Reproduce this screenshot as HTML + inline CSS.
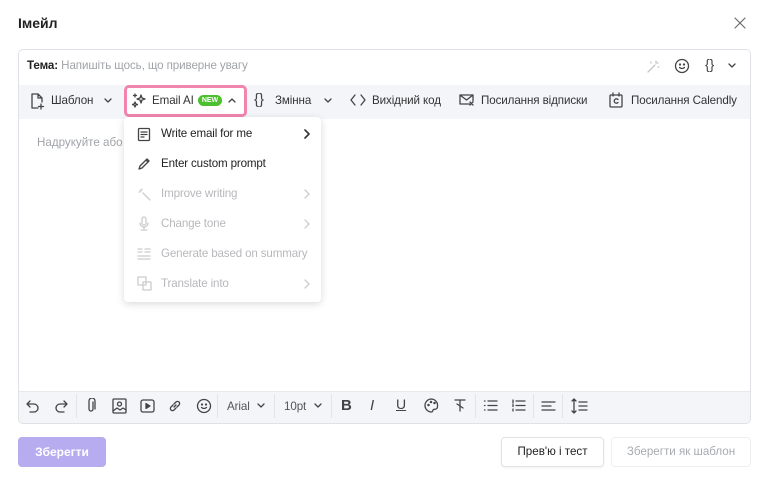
<!DOCTYPE html>
<html><head><meta charset="utf-8"><style>
*{box-sizing:border-box;margin:0;padding:0}
body{width:768px;height:481px;background:#fff;font-family:"Liberation Sans",sans-serif;color:#222;position:relative;overflow:hidden;font-size:12px}
.a{position:absolute}
svg{position:absolute;fill:none;stroke:#444;stroke-width:1.3;stroke-linecap:round;stroke-linejoin:round}
.tb{color:#333;font-size:11.6px;white-space:nowrap;letter-spacing:-0.1px}
.mi{position:absolute;left:161px;font-size:11.6px;color:#222;letter-spacing:-0.15px}
.dis{color:#b8b8bc}
</style></head><body>
<div class="a" style="left:18px;top:15px;font-size:14px;font-weight:bold;color:#222">Імейл</div>
<svg style="left:734px;top:17px" width="12" height="12"><path d="M1 1L11 11M11 1L1 11" stroke="#666" stroke-width="1.1"/></svg>

<div class="a" style="left:18px;top:49px;width:733px;height:375px;border:1px solid #dfe1e6;border-radius:5px;overflow:hidden">
 <div class="a" style="left:0;top:35px;width:100%;height:34px;background:#f3f5f9"></div>
 <div class="a" style="left:0;top:341px;width:100%;height:34px;background:#f3f5f9;border-top:1px solid #e6e8ec"></div>
</div>
<div class="a" style="left:27px;top:59px;font-size:11.6px;letter-spacing:-0.1px"><b>Тема:</b> <span style="color:#a0a3a8">Напишіть щось, що приверне увагу</span></div>
<svg style="left:645px;top:59px" width="16" height="16"><path d="M3 13L10 6M11 2v2M13 4h-2M6 3v1M14 8h-1" stroke="#c4c6ca"/></svg>
<svg style="left:674px;top:58px" width="16" height="16"><circle cx="8" cy="8" r="6.5"/><path d="M5.5 9.5q2.5 2 5 0"/><circle cx="6" cy="6.5" r=".5"/><circle cx="10" cy="6.5" r=".5"/></svg>
<div class="a" style="left:705px;top:56px;font-size:14px;color:#444">{}</div>
<svg style="left:727px;top:62px" width="10" height="8"><path d="M2 2l3 3 3-3"/></svg>

<!-- toolbar -->
<svg style="left:29px;top:92px" width="16" height="18"><path d="M9 2H3v14h6M9 2l4 4v4M9 2v4h4M12 12v5M9.5 14.5h5"/></svg>
<div class="a tb" style="left:51px;top:94px">Шаблон</div>
<svg style="left:103px;top:97px" width="10" height="8"><path d="M2 2l3 3 3-3"/></svg>
<div class="a" style="left:124px;top:85px;width:123px;height:32px;border:3px solid #f285ae;border-radius:5px;background:#fff"></div>
<svg style="left:131px;top:92px" width="16" height="16"><path d="M10 3l1 3 3 1-3 1-1 3-1-3-3-1 3-1zM4 10l.7 1.8 1.8.7-1.8.7L4 15l-.7-1.8-1.8-.7 1.8-.7zM4 2v3M2.5 3.5h3"/></svg>
<div class="a tb" style="left:152px;top:94px">Email AI</div>
<div class="a" style="left:198px;top:95px;width:24px;height:11px;background:#4cc02e;border-radius:6px;color:#fff;font-size:7px;font-weight:bold;text-align:center;line-height:11px">NEW</div>
<svg style="left:227px;top:96px" width="10" height="8"><path d="M2 6l3-3 3 3"/></svg>
<div class="a" style="left:254px;top:91px;font-size:15px;color:#444">{}</div>
<div class="a tb" style="left:275px;top:94px">Змінна</div>
<svg style="left:323px;top:97px" width="10" height="8"><path d="M2 2l3 3 3-3"/></svg>
<svg style="left:350px;top:94px" width="16" height="12"><path d="M5 1L1 6l4 5M11 1l4 5-4 5"/></svg>
<div class="a tb" style="left:372px;top:94px">Вихідний код</div>
<svg style="left:459px;top:93px" width="16" height="14"><path d="M11 11H1V2h13v6M1 2l6.5 5L14 2M11 9l3 3M14 9l-3 3"/></svg>
<div class="a tb" style="left:481px;top:94px">Посилання відписки</div>
<svg style="left:609px;top:92px" width="15" height="16"><rect x="1" y="3" width="12" height="12" rx="1"/><path d="M4 1v3M10 1v3M9 7.5a2.2 2.2 0 1 0 0 3"/></svg>
<div class="a tb" style="left:631px;top:94px">Посилання Calendly</div>

<div class="a" style="left:37px;top:136px;color:#a0a3a8;font-size:11.6px">Надрукуйте або</div>

<!-- menu -->
<div class="a" style="left:124px;top:117px;width:197px;height:185px;background:#fff;border-radius:4px;box-shadow:0 2px 8px rgba(0,0,0,.15)"></div>
<svg style="left:137px;top:127px" width="14" height="15"><rect x="1.5" y="1.5" width="11" height="12" rx="1"/><path d="M4 5h6M4 7.5h6M4 10h3"/></svg>
<div class="mi" style="top:127px">Write email for me</div>
<svg style="left:302px;top:129px" width="10" height="10"><path d="M3 1l4 4-4 4" stroke="#333" stroke-width="1.6"/></svg>
<svg style="left:137px;top:157px" width="14" height="14"><path d="M2 12l1-3 7-7 2 2-7 7zM9 3l2 2"/></svg>
<div class="mi" style="top:157px">Enter custom prompt</div>
<svg style="left:137px;top:187px" width="14" height="14"><path d="M3 3l1 1M5 2v1M2 5h1M6 6l7 7" stroke="#ccc"/></svg>
<div class="mi dis" style="top:187px">Improve writing</div>
<svg style="left:302px;top:189px" width="10" height="10"><path d="M3 1l4 4-4 4" stroke="#ccc"/></svg>
<svg style="left:137px;top:216px" width="14" height="16"><rect x="5" y="1" width="4" height="8" rx="2" stroke="#ccc"/><path d="M3 7a4 4 0 0 0 8 0M7 11v3M4 14h6" stroke="#ccc"/></svg>
<div class="mi dis" style="top:217px">Change tone</div>
<svg style="left:302px;top:219px" width="10" height="10"><path d="M3 1l4 4-4 4" stroke="#ccc"/></svg>
<svg style="left:137px;top:247px" width="14" height="14"><path d="M1 2h4M8 2h5M1 5h4M8 5h5M1 9h12M1 12h12" stroke="#ccc"/></svg>
<div class="mi dis" style="top:247px">Generate based on summary</div>
<svg style="left:137px;top:276px" width="15" height="15"><rect x="1" y="1" width="8" height="8" stroke="#ccc"/><rect x="6" y="6" width="8" height="8" stroke="#ccc"/></svg>
<div class="mi dis" style="top:277px">Translate into</div>
<svg style="left:302px;top:279px" width="10" height="10"><path d="M3 1l4 4-4 4" stroke="#ccc"/></svg>

<!-- bottom toolbar -->
<svg style="left:26px;top:399px" width="14" height="14"><path d="M4 2L1 5l3 3M1 5h7a4 4 0 0 1 0 8H4"/></svg>
<svg style="left:54px;top:399px" width="14" height="14"><path d="M10 2l3 3-3 3M13 5H6a4 4 0 0 0 0 8h4"/></svg>
<div class="a" style="left:76px;top:394px;width:1px;height:24px;background:#e2e4e8"></div>
<svg style="left:85px;top:398px" width="12" height="16"><path d="M8 4v7a2 2 0 0 1-4 0V3a3 3 0 0 1 6 0v8"/></svg>
<svg style="left:112px;top:398px" width="15" height="16"><rect x="1" y="1" width="13" height="14" rx="1"/><circle cx="7.5" cy="6" r="2"/><path d="M1 13l4-3 3 2 3-2 3 2"/></svg>
<svg style="left:140px;top:399px" width="15" height="14"><rect x="1" y="1" width="13" height="12" rx="2"/><path d="M6 4.5v5l4-2.5z" fill="#444"/></svg>
<svg style="left:168px;top:399px" width="14" height="14"><path d="M6 8l2-2M5 6L3 8a2 2 0 0 0 3 3l2-2M9 8l2-2a2 2 0 0 0-3-3L6 5"/></svg>
<svg style="left:196px;top:398px" width="16" height="16"><circle cx="8" cy="8" r="6.5"/><path d="M5.5 9.5q2.5 2 5 0"/><circle cx="6" cy="6.5" r=".5"/><circle cx="10" cy="6.5" r=".5"/></svg>
<div class="a" style="left:217px;top:394px;width:1px;height:24px;background:#e2e4e8"></div>
<div class="a tb" style="left:227px;top:400px;color:#555">Arial</div>
<svg style="left:256px;top:402px" width="10" height="8"><path d="M2 2l3 3 3-3"/></svg>
<div class="a" style="left:274px;top:394px;width:1px;height:24px;background:#e2e4e8"></div>
<div class="a tb" style="left:284px;top:400px;color:#555">10pt</div>
<svg style="left:313px;top:402px" width="10" height="8"><path d="M2 2l3 3 3-3"/></svg>
<div class="a" style="left:331px;top:394px;width:1px;height:24px;background:#e2e4e8"></div>
<div class="a" style="left:341px;top:397px;font-size:15px;font-weight:bold;color:#444">B</div>
<div class="a" style="left:370px;top:397px;font-size:15px;font-style:italic;color:#444">I</div>
<div class="a" style="left:396px;top:396px;font-size:14px;color:#444;text-decoration:underline">U</div>
<svg style="left:424px;top:398px" width="15" height="15"><path d="M7.5 1a6.5 6.5 0 0 0 0 13c1.5 0 1-2 2-2.5s4 .5 4-3A6.5 6.5 0 0 0 7.5 1z"/><circle cx="4.5" cy="7" r=".6"/><circle cx="7" cy="4" r=".6"/><circle cx="10.5" cy="5" r=".6"/></svg>
<svg style="left:453px;top:398px" width="14" height="15"><path d="M2 2h10M7 2v11M4 6l6 4"/></svg>
<div class="a" style="left:475px;top:394px;width:1px;height:24px;background:#e2e4e8"></div>
<svg style="left:483px;top:399px" width="15" height="13"><path d="M5 2h9M5 6.5h9M5 11h9M1.5 2h.5M1.5 6.5h.5M1.5 11h.5"/></svg>
<svg style="left:511px;top:399px" width="15" height="13"><path d="M5 2h9M5 6.5h9M5 11h9M2 1v3M2 5.5v2M2 10v2"/></svg>
<div class="a" style="left:533px;top:394px;width:1px;height:24px;background:#e2e4e8"></div>
<svg style="left:541px;top:400px" width="15" height="12"><path d="M1 2h13M1 6h9M1 10h13"/></svg>
<div class="a" style="left:562px;top:394px;width:1px;height:24px;background:#e2e4e8"></div>
<svg style="left:570px;top:398px" width="18" height="16"><path d="M4 1v14M2 3l2-2 2 2M2 13l2 2 2-2M9 4h8M9 8h8M9 12h8"/></svg>

<!-- buttons -->
<div class="a" style="left:18px;top:437px;width:88px;height:30px;background:#b8acf0;border-radius:4px;color:#fff;font-weight:bold;text-align:center;line-height:30px;font-size:12px">Зберегти</div>
<div class="a" style="left:501px;top:437px;width:103px;height:30px;border:1px solid #e0e2e6;border-radius:4px;text-align:center;line-height:28px;font-size:11.6px;color:#222;box-shadow:0 1px 2px rgba(0,0,0,.06)">Прев'ю і тест</div>
<div class="a" style="left:611px;top:437px;width:140px;height:30px;border:1px solid #eceef1;border-radius:4px;text-align:center;line-height:28px;font-size:11.6px;color:#a8abb0">Зберегти як шаблон</div>
</body></html>
